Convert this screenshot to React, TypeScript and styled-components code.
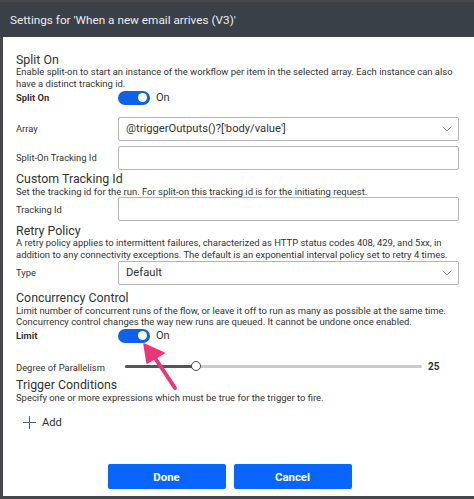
import styled, { createGlobalStyle } from "styled-components"

const GlobalStyle = createGlobalStyle`
  html, body {
    margin: 0;
    padding: 0;
    background: #45474b;
  }
  body {
    font-family: Roboto, "Open Sans", sans-serif;
    color: #333;
  }
`

const Frame = styled.div`
  width: 474px;
  height: 499px;
  box-sizing: border-box;
  padding: 2px 0 3px 3px;
  background: #45474b;
  display: flex;
  flex-direction: column;
  overflow: hidden;
`

const Header = styled.div`
  height: 35px;
  flex-shrink: 0;
  background: #3a4048;
  color: #ececec;
  font-size: 11.76px;
  display: flex;
  align-items: center;
  margin-left: -3px;
  padding-left: 10px;
`

const Body = styled.div`
  flex: 1;
  background: #fff;
  padding: 15.6px 15px 0 13px;
  display: flex;
  flex-direction: column;
`

const Heading = styled.div<{ $mt?: number }>`
  font-size: 12.4px;
  line-height: 13px;
  color: #333;
  margin-top: ${(p) => p.$mt ?? 0}px;
  margin-bottom: 0.6px;
`

const Desc = styled.div`
  font-size: 9.45px;
  line-height: 11.6px;
  color: #333;
`

const Row = styled.div<{ $h?: number; $mt?: number }>`
  display: flex;
  align-items: center;
  height: ${(p) => p.$h ?? 24}px;
  margin-top: ${(p) => p.$mt ?? 0}px;
  flex-shrink: 0;
`

const Label = styled.div<{ $bold?: boolean }>`
  width: 102px;
  flex-shrink: 0;
  font-size: 9.4px;
  font-weight: ${(p) => (p.$bold ? 700 : 400)};
  color: #333;
`

const Input = styled.div`
  flex: 1;
  height: 24px;
  box-sizing: border-box;
  border: 1px solid #b5b5b5;
  border-radius: 2px;
  display: flex;
  align-items: center;
  padding: 0 6px 0 7px;
  font-size: 11.2px;
  color: #333;
`

const InputText = styled.span`
  flex: 1;
`

const ToggleTrack = styled.div`
  width: 32px;
  height: 14px;
  border-radius: 7px;
  background: #0b64e8;
  position: relative;
  flex-shrink: 0;
`

const Knob = styled.div`
  position: absolute;
  right: 3px;
  top: 2.5px;
  width: 9px;
  height: 9px;
  border-radius: 50%;
  background: #fff;
`

const ToggleText = styled.span`
  font-size: 11px;
  margin-left: 6px;
`

const SliderWrap = styled.div`
  flex: 1;
  display: flex;
  align-items: center;
  padding-left: 7px;
  margin-top: -2px;
`

const Track = styled.div`
  flex: 1;
  height: 3px;
  background: #cbcbcb;
  position: relative;
  border-radius: 2px;
`

const Filled = styled.div`
  position: absolute;
  left: 0;
  top: 0;
  bottom: 0;
  background: #555;
  border-radius: 2px;
`

const Thumb = styled.div`
  position: absolute;
  top: -4px;
  width: 8px;
  height: 8px;
  margin-left: -5px;
  border: 1.5px solid #444;
  border-radius: 50%;
  background: #fff;
`

const SliderValue = styled.span`
  width: 31px;
  margin-left: 6px;
  font-size: 10px;
  font-weight: 700;
  color: #333;
`

const AddRow = styled.div`
  display: flex;
  align-items: center;
  gap: 6px;
  height: 18px;
  margin-top: 10px;
  padding-left: 7px;
  font-size: 11.2px;
  color: #333;
`

const Buttons = styled.div`
  display: flex;
  justify-content: center;
  gap: 8px;
  margin-top: auto;
  margin-bottom: 7px;
  padding-right: 16px;
`

const Button = styled.button`
  width: 118px;
  height: 25px;
  border: none;
  border-radius: 2px;
  background: #0866ff;
  color: #fff;
  font-family: Roboto, "Open Sans", sans-serif;
  font-size: 11.4px;
  font-weight: 700;
  padding: 0;
`

const Chevron = () => (
  <svg width="10" height="6" viewBox="0 0 10 6">
    <path d="M0.5 0.5L5 5L9.5 0.5" fill="none" stroke="#999" strokeWidth="1" />
  </svg>
)

const Toggle = () => (
  <>
    <ToggleTrack>
      <Knob />
    </ToggleTrack>
    <ToggleText>On</ToggleText>
  </>
)

const Arrow = styled.svg`
  position: absolute;
  left: 138px;
  top: 340px;
`

export default function App() {
  const pct = 24
  return (
    <>
      <GlobalStyle />
      <Frame>
        <Header>Settings for 'When a new email arrives (V3)'</Header>
        <Body>
          <Heading>Split On</Heading>
          <Desc>
            Enable split-on to start an instance of the workflow per item in the selected array. Each instance can also
            have a distinct tracking id.
          </Desc>
          <Row $h={16} $mt={0.4}>
            <Label $bold>Split On</Label>
            <Toggle />
          </Row>
          <Row $mt={11}>
            <Label>Array</Label>
            <Input>
              <InputText>@triggerOutputs()?['body/value']</InputText>
              <Chevron />
            </Input>
          </Row>
          <Row $mt={5}>
            <Label>Split-On Tracking Id</Label>
            <Input />
          </Row>
          <Heading $mt={2.4}>Custom Tracking Id</Heading>
          <Desc>Set the tracking id for the run. For split-on this tracking id is for the initiating request.</Desc>
          <Row>
            <Label>Tracking Id</Label>
            <Input />
          </Row>
          <Heading $mt={2.4}>Retry Policy</Heading>
          <Desc>
            A retry policy applies to intermittent failures, characterized as HTTP status codes 408, 429, and 5xx, in
            addition to any connectivity exceptions. The default is an exponential interval policy set to retry 4 times.
          </Desc>
          <Row>
            <Label>Type</Label>
            <Input>
              <InputText>Default</InputText>
              <Chevron />
            </Input>
          </Row>
          <Heading $mt={6.4}>Concurrency Control</Heading>
          <Desc>
            Limit number of concurrent runs of the flow, or leave it off to run as many as possible at the same time.
            Concurrency control changes the way new runs are queued. It cannot be undone once enabled.
          </Desc>
          <Row $h={16}>
            <Label $bold>Limit</Label>
            <Toggle />
          </Row>
          <Row $h={20} $mt={14}>
            <Label>Degree of Parallelism</Label>
            <SliderWrap>
              <Track>
                <Filled style={{ width: `${pct}%` }} />
                <Thumb style={{ left: `${pct}%` }} />
              </Track>
              <SliderValue>25</SliderValue>
            </SliderWrap>
          </Row>
          <Heading $mt={0.6}>Trigger Conditions</Heading>
          <Desc>Specify one or more expressions which must be true for the trigger to fire.</Desc>
          <AddRow>
            <svg width="13" height="13" viewBox="0 0 13 13">
              <path d="M6.5 0v13M0 6.5h13" stroke="#5a6470" strokeWidth="1.1" />
            </svg>
            Add
          </AddRow>
          <Buttons>
            <Button>Done</Button>
            <Button>Cancel</Button>
          </Buttons>
        </Body>
      </Frame>
      <Arrow width="45" height="52" viewBox="0 0 45 52">
        <path d="M37 48L17 18" stroke="#ef3478" strokeWidth="4" strokeLinecap="round" />
        <path d="M6 4L26 13L9 23Z" fill="#ef3478" stroke="#ef3478" strokeWidth="1.5" strokeLinejoin="round" />
      </Arrow>
    </>
  )
}
